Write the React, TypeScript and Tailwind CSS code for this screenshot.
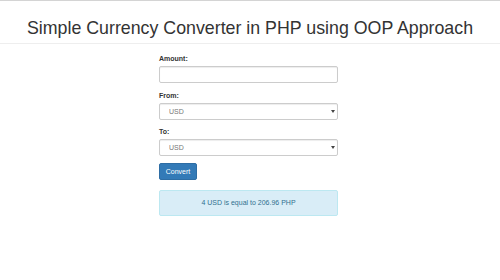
import React from 'react';

function SelectBox({ value }: { value: string }) {
  return (
    <div className="relative">
      <select
        defaultValue={value}
        className="block h-[17px] w-full appearance-none rounded-[2px] border border-[#ccc] bg-white pl-[9px] text-[7px] leading-[15px] text-[#777] shadow-[inset_0_1px_1px_rgba(0,0,0,0.075)] outline-none"
      >
        <option>USD</option>
        <option>PHP</option>
        <option>EUR</option>
      </select>
      <span className="pointer-events-none absolute right-[3px] top-[7px] h-0 w-0 border-x-[2px] border-t-[3px] border-x-transparent border-t-[#444]" />
    </div>
  );
}

export default function App() {
  return (
    <div className="h-[280px] w-[500px] overflow-hidden border-t border-[#d4d4d4] bg-white font-['Liberation_Sans',Arial,sans-serif] text-[#333]">
      {/* Header */}
      <div className="border-b border-[#eee] pb-[5px] pt-[17px]">
        <h1 className="text-center text-[17.8px] leading-[20px] font-normal text-[#333]">
          Simple Currency Converter in PHP using OOP Approach
        </h1>
      </div>

      {/* Form */}
      <div className="flex justify-center pr-[3px] pt-[10px]">
        <form className="w-[179px]" onSubmit={(e) => e.preventDefault()}>
          <div className="mb-[8px]">
            <label className="mb-[2px] block text-[7px] leading-[10px] font-bold">Amount:</label>
            <input
              type="text"
              className="block h-[17px] w-full rounded-[2px] border border-[#ccc] bg-white px-[6px] text-[7px] shadow-[inset_0_1px_1px_rgba(0,0,0,0.075)] outline-none"
            />
          </div>
          <div className="mb-[7px]">
            <label className="mb-[2px] block text-[7px] leading-[10px] font-bold">From:</label>
            <SelectBox value="USD" />
          </div>
          <div className="mb-[7px]">
            <label className="mb-[2px] block text-[7px] leading-[10px] font-bold">To:</label>
            <SelectBox value="USD" />
          </div>
          <button
            type="submit"
            className="block h-[17px] w-[38px] rounded-[2px] border border-[#2e6da4] bg-[#337ab7] text-[7px] leading-[15px] text-white"
          >
            Convert
          </button>
          <div className="mt-[10px] flex h-[26px] items-center justify-center rounded-[2px] border border-[#bce8f1] bg-[#d9edf7] text-[7px] text-[#31708f]">
            4 USD is equal to 206.96 PHP
          </div>
        </form>
      </div>
    </div>
  );
}
